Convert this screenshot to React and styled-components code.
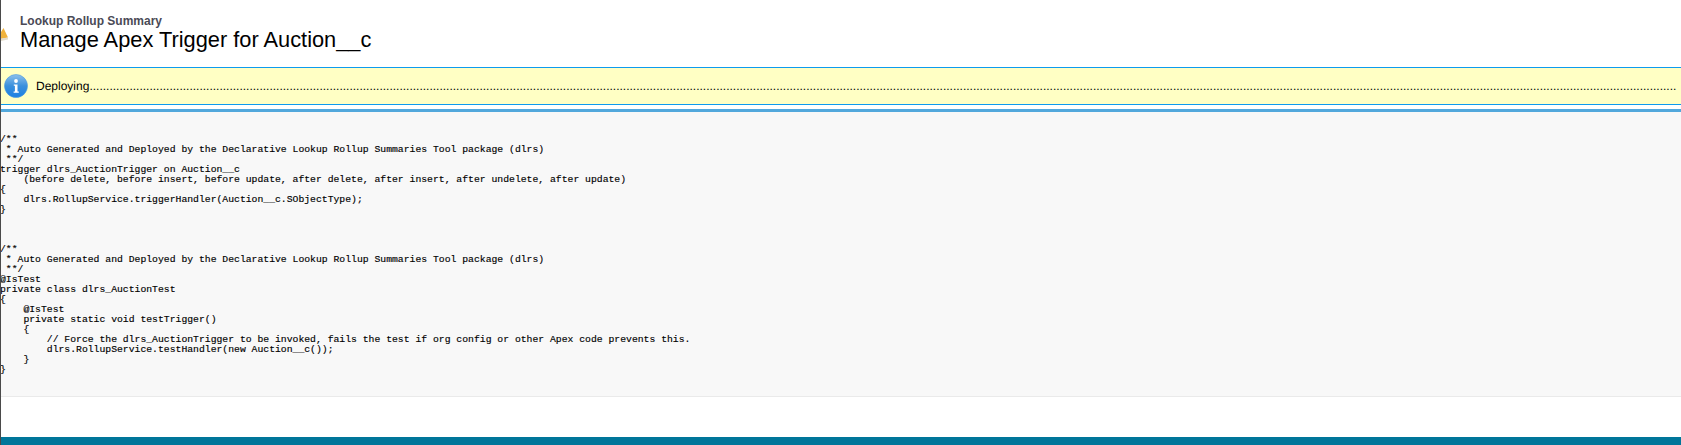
import React from "react";
import styled, { createGlobalStyle } from "styled-components";

const GlobalStyle = createGlobalStyle`
  html, body {
    margin: 0;
    padding: 0;
    height: 100%;
    overflow: hidden;
    background: #fff;
  }
  #root {
    height: 100%;
  }
`;

const triggerCode = `/**
 * Auto Generated and Deployed by the Declarative Lookup Rollup Summaries Tool package (dlrs)
 **/
trigger dlrs_AuctionTrigger on Auction__c
    (before delete, before insert, before update, after delete, after insert, after undelete, after update)
{
    dlrs.RollupService.triggerHandler(Auction__c.SObjectType);
}`;

const testCode = `/**
 * Auto Generated and Deployed by the Declarative Lookup Rollup Summaries Tool package (dlrs)
 **/
@IsTest
private class dlrs_AuctionTest
{
    @IsTest
    private static void testTrigger()
    {
        // Force the dlrs_AuctionTrigger to be invoked, fails the test if org config or other Apex code prevents this.
        dlrs.RollupService.testHandler(new Auction__c());
    }
}`;

const InfoIcon = () => (
  <IconSvg width="24" height="24" viewBox="0 0 24 24">
    <defs>
      <linearGradient id="infoFill" x1="0" y1="0" x2="0" y2="1">
        <stop offset="0" stopColor="#8cc0ec" />
        <stop offset="0.5" stopColor="#3a90dc" />
        <stop offset="1" stopColor="#1a80e4" />
      </linearGradient>
    </defs>
    <circle cx="12" cy="12" r="11.5" fill="url(#infoFill)" stroke="#4b9ade" strokeWidth="0.6" />
    <circle cx="12" cy="7" r="1.9" fill="#fff" />
    <path d="M9.8 10.4h3.7v7h1.3v1.4H9.6v-1.4h1.3v-5.6H9.8z" fill="#fff" />
  </IconSvg>
);

const PageIcon = () => (
  <svg width="8" height="14" viewBox="0 0 8 14">
    <path d="M0 11 L0 4 L2.5 0 L7 9.5 Z" fill="#f0b23c" />
    <path d="M0 10.5 L7 9.5 L7 11.4 L0 13 Z" fill="#e4dccb" />
  </svg>
);

const App = () => (
  <Page>
    <GlobalStyle />
    <Header>
      <HeaderIcon>
        <PageIcon />
      </HeaderIcon>
      <HeaderText>
        <Subtitle>Lookup Rollup Summary</Subtitle>
        <Title>Manage Apex Trigger for Auction__c</Title>
      </HeaderText>
    </Header>
    <Message>
      <InfoIcon />
      <MessageText>Deploying{".".repeat(476)}</MessageText>
    </Message>
    <BlueBar />
    <CodePanel>
      <Code>{triggerCode}</Code>
      <Code>{testCode}</Code>
    </CodePanel>
    <Spacer />
    <Footer />
  </Page>
);

export default App;

const Page = styled.div`
  display: flex;
  flex-direction: column;
  box-sizing: border-box;
  height: 100%;
  border-left: 1px solid #4a4a4a;
  font-family: "Liberation Sans", Arial, sans-serif;
  overflow: hidden;
`;

const Header = styled.div`
  display: flex;
  height: 67px;
  flex: none;
  box-sizing: border-box;
  padding-top: 15px;
`;

const HeaderIcon = styled.div`
  width: 19px;
  flex: none;
  padding-top: 13px;
`;

const HeaderText = styled.div`
  display: flex;
  flex-direction: column;
`;

const Subtitle = styled.div`
  font-size: 12px;
  line-height: 13px;
  font-weight: 700;
  color: #4a4a56;
`;

const Title = styled.h1`
  margin: 0;
  font-size: 21.8px;
  line-height: 23px;
  font-weight: 400;
  color: #000;
  white-space: nowrap;
`;

const Message = styled.div`
  display: flex;
  align-items: center;
  gap: 8px;
  height: 38px;
  flex: none;
  box-sizing: border-box;
  padding: 0 0 0 3px;
  background: #ffffc4;
  border-top: 1px solid #0d9bee;
  border-bottom: 1px solid #0d9bee;
  overflow: hidden;
`;

const IconSvg = styled.svg`
  flex: none;
`;

const MessageText = styled.div`
  font-size: 12px;
  color: #000;
  white-space: nowrap;
  text-rendering: geometricPrecision;
`;

const BlueBar = styled.div`
  flex: none;
  height: 3px;
  margin-top: 4px;
  background: #52a8dc;
`;

const CodePanel = styled.div`
  flex: none;
  display: flex;
  flex-direction: column;
  gap: 30px;
  height: 285px;
  box-sizing: border-box;
  padding-top: 23px;
  background: #f8f8f8;
  border-bottom: 1px solid #eaeaea;
`;

const Code = styled.pre`
  margin: 0 0 0 -1px;
  font-family: "Liberation Mono", "Courier New", monospace;
  font-size: 9.75px;
  line-height: 10px;
  color: #000;
  -webkit-text-stroke: 0.15px #000;
`;

const Spacer = styled.div`
  flex: 1;
`;

const Footer = styled.div`
  flex: none;
  height: 8px;
  background: #00769a;
`;
